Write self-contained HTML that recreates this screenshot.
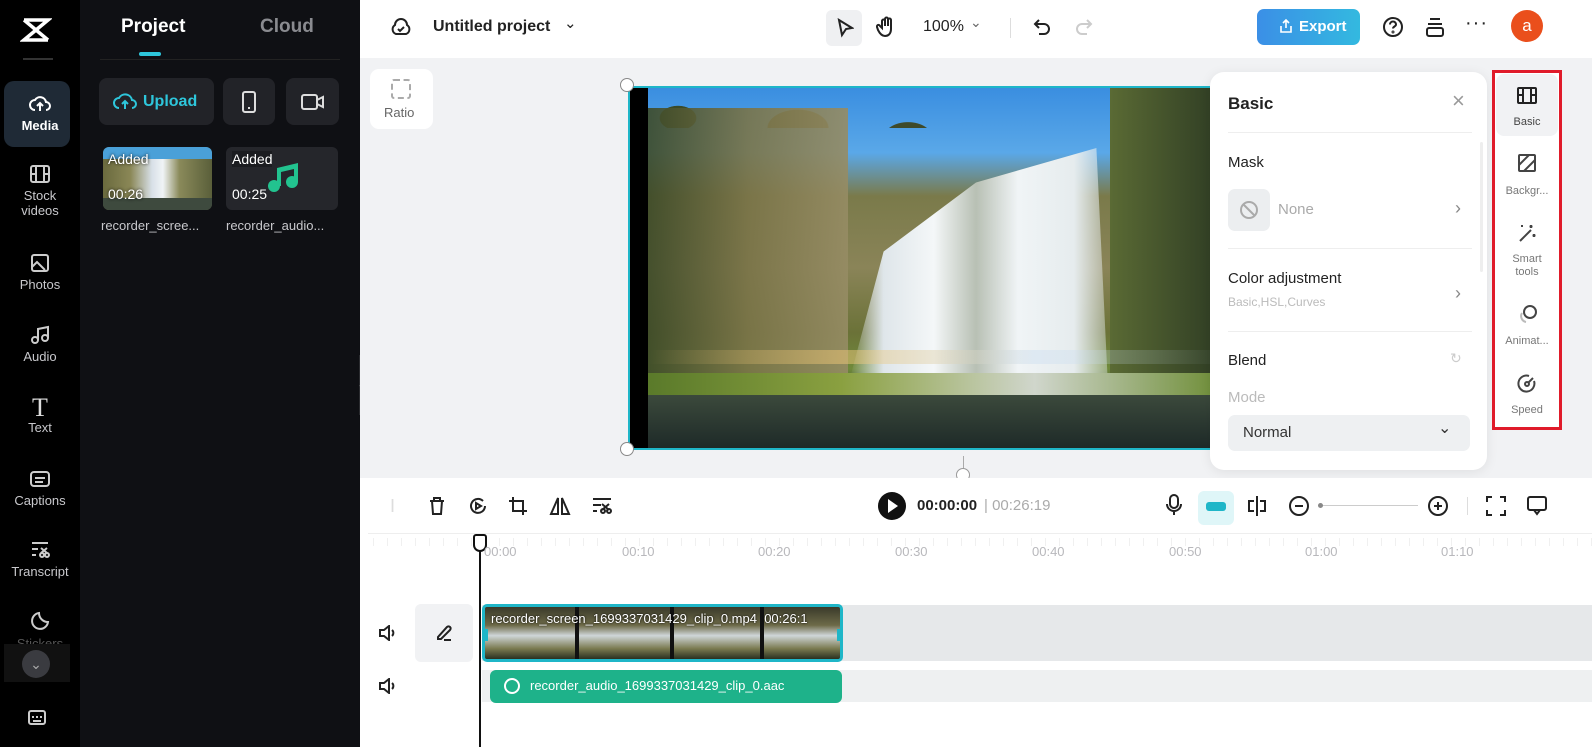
<!DOCTYPE html>
<html><head><meta charset="utf-8"><style>
*{box-sizing:border-box;margin:0;padding:0}
body{width:1592px;height:747px;overflow:hidden;font-family:"Liberation Sans",Arial,sans-serif;background:#fff;position:relative}
.a{position:absolute}
.rail{left:0;top:0;width:80px;height:747px;background:#000}
.ri{position:absolute;left:0;width:80px;text-align:center;color:#c8c8cc;font-size:13px}
.ri svg{display:block;margin:0 auto 4px}
.panel{left:80px;top:0;width:280px;height:747px;background:#0f1014}
.btn{position:absolute;background:#222328;border-radius:8px}
.top{left:360px;top:0;width:1232px;height:58px;background:#fff}
.canvas{left:360px;top:58px;width:1232px;height:420px;background:#f1f2f4}
.tl{left:360px;top:478px;width:1232px;height:269px;background:#fff}
.tick{position:absolute;top:544px;font-size:13px;color:#b8b8bc}
</style></head><body>
<div class="a rail">
 <svg class="a" style="left:20px;top:14px" width="32" height="32" viewBox="0 0 32 32" fill="none" stroke="#fff" stroke-width="3.5"><path d="M4 6h24L4 26h24"/><path d="M4 6l24 20"/></svg>
 <div class="a" style="left:23px;top:58px;width:30px;height:2px;background:#333"></div>
 <div class="a" style="left:4px;top:81px;width:66px;height:66px;background:#1f2a36;border-radius:10px"></div>
 <div class="ri" style="top:94px;color:#fff;font-weight:bold"><svg width="22" height="20" viewBox="0 0 22 20" fill="none" stroke="#fff" stroke-width="2"><path d="M6 16a5 5 0 010-10 6 6 0 0111 2 4 4 0 010 8"/><path d="M11 17V10M8 12l3-3 3 3"/></svg>Media</div>
 <div class="ri" style="top:164px"><svg width="22" height="20" viewBox="0 0 22 20" fill="none" stroke="#ccc" stroke-width="2"><rect x="2" y="2" width="18" height="16" rx="2"/><path d="M7 2v16M15 2v16M2 10h5M15 10h5"/></svg>Stock<br>videos</div>
 <div class="ri" style="top:253px"><svg width="22" height="20" viewBox="0 0 22 20" fill="none" stroke="#ccc" stroke-width="2"><rect x="3" y="2" width="16" height="16" rx="2"/><path d="M3 14l5-5 8 8"/></svg>Photos</div>
 <div class="ri" style="top:325px"><svg width="22" height="20" viewBox="0 0 22 20" fill="none" stroke="#ccc" stroke-width="2"><circle cx="6" cy="15" r="3"/><circle cx="16" cy="13" r="3"/><path d="M9 15V4l10-2v11"/></svg>Audio</div>
 <div class="ri" style="top:396px"><div style="font-family:'Liberation Serif';font-size:26px;line-height:24px;color:#ddd">T</div>Text</div>
 <div class="ri" style="top:469px"><svg width="22" height="20" viewBox="0 0 22 20" fill="none" stroke="#ccc" stroke-width="2"><rect x="2" y="3" width="18" height="14" rx="3"/><path d="M6 9h10M6 13h8"/></svg>Captions</div>
 <div class="ri" style="top:540px"><svg width="22" height="20" viewBox="0 0 22 20" fill="none" stroke="#ccc" stroke-width="2"><path d="M3 3h16M3 9h6M3 15h4"/><circle cx="13" cy="15" r="2"/><circle cx="18" cy="15" r="2"/><path d="M12 8l6 5M18 8l-6 5"/></svg>Transcript</div>
 <div class="ri" style="top:610px"><svg width="22" height="22" viewBox="0 0 22 22" fill="none" stroke="#ccc" stroke-width="2"><path d="M19 12A8 8 0 1110 3a9 9 0 009 9z"/></svg><span style="color:#555">Stickers</span></div>
 <div class="a" style="left:4px;top:644px;width:66px;height:38px;background:#111"></div>
 <div class="a" style="left:22px;top:650px;width:28px;height:28px;border-radius:50%;background:#3a3b40;color:#aaa;text-align:center;line-height:28px;font-size:14px">⌄</div>
 <svg class="a" style="left:27px;top:709px" width="20" height="18" viewBox="0 0 20 18" fill="none" stroke="#ccc" stroke-width="2"><rect x="2" y="2" width="16" height="13" rx="2"/><path d="M6 7v2M10 7v2M14 7v2M6 12h8"/></svg>
</div>
<div class="a panel">
 <div class="a" style="left:41px;top:16px;color:#fff;font-weight:bold;font-size:19px">Project</div>
 <div class="a" style="left:180px;top:16px;color:#8a8b90;font-weight:bold;font-size:19px">Cloud</div>
 <div class="a" style="left:59px;top:52px;width:22px;height:4px;background:#2ec6db;border-radius:2px"></div>
 <div class="a" style="left:20px;top:59px;width:240px;height:1px;background:#222"></div>
 <div class="btn" style="left:19px;top:78px;width:115px;height:47px;color:#2ec6db;font-weight:bold;font-size:16px;line-height:47px;padding-left:14px"><svg style="vertical-align:-5px;margin-right:6px" width="24" height="20" viewBox="0 0 24 20" fill="none" stroke="#2ec6db" stroke-width="2"><path d="M6 17a5 5 0 010-10 7 7 0 0113 2 4 4 0 010 8"/><path d="M12 18v-8M9 13l3-3 3 3"/></svg>Upload</div>
 <div class="btn" style="left:143px;top:78px;width:52px;height:47px"><svg class="a" style="left:18px;top:13px" width="16" height="22" viewBox="0 0 16 22" fill="none" stroke="#ddd" stroke-width="2"><rect x="2" y="1" width="12" height="20" rx="2"/><path d="M7 17h2"/></svg></div>
 <div class="btn" style="left:206px;top:78px;width:53px;height:47px"><svg class="a" style="left:15px;top:15px" width="24" height="18" viewBox="0 0 24 18" fill="none" stroke="#ddd" stroke-width="2"><rect x="1" y="2" width="15" height="14" rx="2"/><path d="M16 7l6-3v10l-6-3"/></svg></div>
 <div class="a" style="left:23px;top:147px;width:109px;height:63px;border-radius:6px;overflow:hidden;background:linear-gradient(90deg,#6a6a3e 0%,#8a8756 25%,#d8e0e8 45%,#f0f4f6 55%,#8a8a5a 70%,#5a5f3a 100%)"><div class="a" style="left:0;top:0;width:100%;height:12px;background:#4aa0d8"></div><div class="a" style="left:0;bottom:0;width:100%;height:12px;background:#3e4a3e"></div></div>
 <div class="a" style="left:28px;top:151px;color:#fff;font-size:14px;text-shadow:0 0 3px #000">Added</div>
 <div class="a" style="left:28px;top:186px;color:#fff;font-size:14px;text-shadow:0 0 3px #000">00:26</div>
 <div class="a" style="left:146px;top:147px;width:112px;height:63px;border-radius:6px;background:#25262b"></div>
 <div class="a" style="left:152px;top:151px;color:#fff;font-size:14px;background:#1b1c20">Added</div>
 <div class="a" style="left:152px;top:186px;color:#fff;font-size:14px">00:25</div>
 <svg class="a" style="left:186px;top:160px" width="34" height="34" viewBox="0 0 34 34" fill="#22c38f"><circle cx="8" cy="26" r="6"/><circle cx="26" cy="22" r="6"/><path d="M11 26V8l21-5v19h-4V9l-13 3v14z"/></svg>
 <div class="a" style="left:21px;top:218px;color:#c8c8cc;font-size:13px">recorder_scree...</div>
 <div class="a" style="left:146px;top:218px;color:#c8c8cc;font-size:13px">recorder_audio...</div>
</div>
<div class="a" style="left:359px;top:355px;width:11px;height:60px;background:#2a2b2f;border-radius:0 8px 8px 0;color:#777;font-size:12px;line-height:60px">‹</div>

<div class="a top">
 <svg class="a" style="left:30px;top:16px" width="22" height="22" viewBox="0 0 22 22" fill="none" stroke="#222" stroke-width="2"><path d="M6 18a5 5 0 01-1-9 6 6 0 0112 0 5 5 0 01-1 9z"/><path d="M8 13l2 2 4-4"/></svg>
 <div class="a" style="left:73px;top:18px;font-weight:bold;font-size:16px;color:#222">Untitled project</div>
 <div class="a" style="left:204px;top:14px;font-size:15px;color:#222">⌄</div>
 <div class="a" style="left:466px;top:10px;width:36px;height:36px;background:#eff0f2;border-radius:6px"></div>
 <svg class="a" style="left:476px;top:18px" width="18" height="20" viewBox="0 0 18 20" fill="none" stroke="#222" stroke-width="2"><path d="M3 2l13 8-6 1-4 6z"/></svg>
 <svg class="a" style="left:516px;top:16px" width="20" height="22" viewBox="0 0 20 22" fill="none" stroke="#222" stroke-width="2"><path d="M6 12V5a1.5 1.5 0 013 0v5V3a1.5 1.5 0 013 0v7V4a1.5 1.5 0 013 0v9c0 5-3 7-6 7s-5-2-7-6l-1-3a1.5 1.5 0 013-1z"/></svg>
 <div class="a" style="left:563px;top:18px;font-size:16px;color:#222">100%</div>
 <div class="a" style="left:610px;top:14px;font-size:14px;color:#666">⌄</div>
 <div class="a" style="left:650px;top:18px;width:1px;height:20px;background:#ddd"></div>
 <svg class="a" style="left:672px;top:17px" width="20" height="20" viewBox="0 0 20 20" fill="none" stroke="#222" stroke-width="2"><path d="M7 3L3 7l4 4"/><path d="M3 7h9a5 5 0 010 10H7"/></svg>
 <svg class="a" style="left:714px;top:17px" width="20" height="20" viewBox="0 0 20 20" fill="none" stroke="#ccc" stroke-width="2"><path d="M13 3l4 4-4 4"/><path d="M17 7H8a5 5 0 000 10h5"/></svg>
 <div class="a" style="left:897px;top:9px;width:103px;height:36px;border-radius:7px;background:linear-gradient(90deg,#3b8fe6,#33b9e0);color:#fff;font-weight:bold;font-size:15px;line-height:36px;padding-left:42px">Export</div>
 <svg class="a" style="left:918px;top:18px" width="16" height="16" viewBox="0 0 16 16" fill="none" stroke="#fff" stroke-width="1.6"><path d="M8 10V2M5 5l3-3 3 3M3 8v6h10V8"/></svg>
 <svg class="a" style="left:1022px;top:16px" width="22" height="22" viewBox="0 0 22 22" fill="none" stroke="#222" stroke-width="2"><circle cx="11" cy="11" r="9"/><path d="M8 8.5a3 3 0 116 0c0 2-3 2-3 4"/><circle cx="11" cy="16" r=".5"/></svg>
 <svg class="a" style="left:1065px;top:16px" width="20" height="22" viewBox="0 0 20 22" fill="none" stroke="#222" stroke-width="2"><path d="M5 3h10M3 8h14"/><rect x="2" y="12" width="16" height="8" rx="2"/></svg>
 <div class="a" style="left:1105px;top:12px;font-size:20px;color:#222;letter-spacing:1px">···</div>
 <div class="a" style="left:1151px;top:10px;width:32px;height:32px;border-radius:50%;background:#ea4f1c;color:#fff;text-align:center;line-height:31px;font-size:17px">a</div>
</div>

<div class="a canvas">
 <div class="a" style="left:10px;top:11px;width:63px;height:60px;background:#fff;border-radius:9px"></div>
 <div class="a" style="left:31px;top:21px;width:20px;height:20px;border:2px dashed #aaa;border-radius:3px"></div>
 <div class="a" style="left:24px;top:47px;font-size:13px;color:#666">Ratio</div>
 <div class="a" style="left:268px;top:28px;width:584px;height:364px;border:2px solid #1fb6c8;background:#000;overflow:hidden">
  <div class="a" style="left:18px;top:0;width:600px;height:360px;background:linear-gradient(180deg,#3a8ee0 0%,#5aa8e8 18%,#7a7a4a 30%,#8a8458 50%,#6b7238 68%,#6f8a3a 78%,#3c4a3c 85%,#1e2a28 100%)"></div>
  <div class="a" style="left:18px;top:0;width:600px;height:40px;background:radial-gradient(ellipse 30px 20px at 30px 30px,#3a4a28 60%,transparent 62%),radial-gradient(ellipse 50px 30px at 150px 40px,#445030 60%,transparent 62%),radial-gradient(ellipse 40px 26px at 260px 50px,#3e4a2a 60%,transparent 62%)"></div>
  <div class="a" style="left:18px;top:20px;width:200px;height:270px;background:linear-gradient(90deg,#3d4a28,#7a7448 50%,#968c64);opacity:.9"></div>
  <div class="a" style="left:220px;top:60px;width:280px;height:230px;background:linear-gradient(90deg,rgba(255,255,255,0) 0%,#dfe6ea 12%,#f4f7f8 30%,#b8c0b4 45%,#f0f4f6 60%,#e6ecee 80%,rgba(255,255,255,0) 100%);clip-path:polygon(12% 45%,45% 15%,88% 0,92% 100%,0 100%)"></div>
  <div class="a" style="left:480px;top:0;width:110px;height:300px;background:linear-gradient(90deg,#5a6a34,#2f3d24)"></div>
  <div class="a" style="left:18px;top:262px;width:580px;height:14px;background:linear-gradient(90deg,transparent,rgba(240,200,120,.5),rgba(200,220,240,.4),transparent)"></div>
  <div class="a" style="left:18px;top:285px;width:580px;height:22px;background:linear-gradient(90deg,#5a7a2a,#8aa040,#d0d6cc,#6a8a30)"></div>
 </div>
 <div class="a" style="left:260px;top:20px;width:14px;height:14px;border-radius:50%;background:#fff;border:1.5px solid #888"></div>
 <div class="a" style="left:260px;top:384px;width:14px;height:14px;border-radius:50%;background:#fff;border:1.5px solid #888"></div>
 <div class="a" style="left:850px;top:14px;width:277px;height:398px;background:#fff;border-radius:14px;box-shadow:0 2px 12px rgba(0,0,0,.08)">
  <div class="a" style="left:18px;top:22px;font-weight:bold;font-size:17px;color:#222">Basic</div>
  <div class="a" style="left:242px;top:16px;font-size:22px;color:#999">×</div>
  <div class="a" style="left:18px;top:60px;width:244px;height:1px;background:#eee"></div>
  <div class="a" style="left:18px;top:82px;font-size:15px;color:#222">Mask</div>
  <div class="a" style="left:18px;top:117px;width:42px;height:42px;border-radius:7px;background:#eceef0"></div>
  <svg class="a" style="left:28px;top:127px" width="22" height="22" viewBox="0 0 22 22" fill="none" stroke="#aaa" stroke-width="2"><circle cx="11" cy="11" r="8"/><path d="M5 5l12 12"/></svg>
  <div class="a" style="left:68px;top:129px;font-size:15px;color:#aaa">None</div>
  <div class="a" style="left:245px;top:126px;font-size:18px;color:#888">›</div>
  <div class="a" style="left:18px;top:176px;width:244px;height:1px;background:#eee"></div>
  <div class="a" style="left:18px;top:198px;font-size:15px;color:#222">Color adjustment</div>
  <div class="a" style="left:18px;top:223px;font-size:12px;color:#bbb">Basic,HSL,Curves</div>
  <div class="a" style="left:245px;top:211px;font-size:18px;color:#888">›</div>
  <div class="a" style="left:18px;top:259px;width:244px;height:1px;background:#eee"></div>
  <div class="a" style="left:18px;top:280px;font-size:15px;color:#222">Blend</div>
  <div class="a" style="left:240px;top:278px;font-size:14px;color:#ccc">↻</div>
  <div class="a" style="left:18px;top:317px;font-size:15px;color:#bbb">Mode</div>
  <div class="a" style="left:18px;top:343px;width:242px;height:36px;border-radius:7px;background:#eef0f2"></div>
  <div class="a" style="left:33px;top:352px;font-size:15px;color:#333">Normal</div>
  <div class="a" style="left:228px;top:346px;font-size:16px;color:#333">⌄</div>
  <div class="a" style="left:270px;top:70px;width:3px;height:130px;background:#eee;border-radius:2px"></div>
 </div>
 <div class="a" style="left:1132px;top:12px;width:70px;height:360px;border:3px solid #e01b2a;background:#fff"></div>
 <div class="a" style="left:1136px;top:16px;width:62px;height:62px;background:#f1f2f4;border-radius:8px"></div>
 <svg class="a" style="left:1157px;top:29px" width="20" height="17" viewBox="0 0 20 17" fill="none" stroke="#222" stroke-width="2"><rect x="1" y="1" width="18" height="15" rx="1"/><path d="M6 1v15M14 1v15M1 8h5M14 8h5"/></svg>
 <div class="a" style="left:1136px;top:58px;width:62px;text-align:center;font-size:11px;color:#444">Basic</div>
 <svg class="a" style="left:1158px;top:96px" width="18" height="18" viewBox="0 0 18 18" fill="none" stroke="#444" stroke-width="2"><rect x="1" y="1" width="16" height="16" rx="1"/><path d="M1 11L11 1M6 17L17 6"/></svg>
 <div class="a" style="left:1136px;top:127px;width:62px;text-align:center;font-size:11px;color:#777">Backgr...</div>
 <svg class="a" style="left:1157px;top:165px" width="20" height="20" viewBox="0 0 20 20" fill="none" stroke="#444" stroke-width="2"><path d="M3 18L14 7"/><path d="M14 2v3M12.5 3.5h3M5 2v2M4 3h2M17 11v3M15.5 12.5h3"/></svg>
 <div class="a" style="left:1136px;top:195px;width:62px;text-align:center;font-size:11px;color:#777;line-height:13px">Smart<br>tools</div>
 <svg class="a" style="left:1158px;top:246px" width="20" height="20" viewBox="0 0 20 20" fill="none" stroke="#444" stroke-width="2"><circle cx="12" cy="8" r="6"/><path d="M4 9a6 6 0 004 9" stroke="#bbb"/></svg>
 <div class="a" style="left:1136px;top:277px;width:62px;text-align:center;font-size:11px;color:#777">Animat...</div>
 <svg class="a" style="left:1157px;top:315px" width="20" height="20" viewBox="0 0 20 20" fill="none" stroke="#444" stroke-width="2"><path d="M17 8a8 8 0 11-5-5"/><circle cx="10" cy="11" r="2"/><path d="M11 10l5-5"/></svg>
 <div class="a" style="left:1136px;top:346px;width:62px;text-align:center;font-size:11px;color:#777">Speed</div>
 <div class="a" style="left:603px;top:398px;width:1px;height:14px;background:#aaa"></div>
 <div class="a" style="left:596px;top:410px;width:14px;height:14px;border-radius:50%;background:#fff;border:1px solid #999"></div>
</div>

<div class="a tl">
 <div class="a" style="left:30px;top:18px;font-size:18px;color:#ddd">I</div>
 <svg class="a" style="left:68px;top:18px" width="18" height="20" viewBox="0 0 18 20" fill="none" stroke="#222" stroke-width="2"><path d="M2 5h14M6 5V2h6v3M4 5l1 13h8l1-13"/></svg>
 <svg class="a" style="left:108px;top:18px" width="20" height="20" viewBox="0 0 20 20" fill="none" stroke="#222" stroke-width="2"><path d="M17 10a7 7 0 11-2-5"/><path d="M8 7l5 3-5 3z"/></svg>
 <svg class="a" style="left:148px;top:18px" width="20" height="20" viewBox="0 0 20 20" fill="none" stroke="#222" stroke-width="2"><path d="M5 1v14h14M1 5h14v14"/></svg>
 <svg class="a" style="left:189px;top:18px" width="22" height="20" viewBox="0 0 22 20" fill="none" stroke="#222" stroke-width="2"><path d="M9 2L2 18h7zM13 2l7 16h-7z"/></svg>
 <svg class="a" style="left:231px;top:18px" width="22" height="20" viewBox="0 0 22 20" fill="none" stroke="#222" stroke-width="2"><path d="M2 3h18M2 9h8M2 15h4"/><circle cx="12" cy="15" r="2"/><circle cx="18" cy="15" r="2"/><path d="M11 8l7 6M18 8l-7 6"/></svg>
 <div class="a" style="left:518px;top:14px;width:28px;height:28px;border-radius:50%;background:#111"></div>
 <div class="a" style="left:528px;top:21px;width:0;height:0;border-left:10px solid #fff;border-top:7px solid transparent;border-bottom:7px solid transparent"></div>
 <div class="a" style="left:557px;top:19px;font-size:15px;font-weight:bold;color:#222">00:00:00</div>
 <div class="a" style="left:624px;top:19px;font-size:15px;color:#aaa">| 00:26:19</div>
 <svg class="a" style="left:806px;top:16px" width="16" height="22" viewBox="0 0 16 22" fill="none" stroke="#222" stroke-width="2"><rect x="4" y="1" width="8" height="13" rx="4"/><path d="M1 10a7 7 0 0014 0M8 17v4"/></svg>
 <div class="a" style="left:838px;top:13px;width:36px;height:34px;border-radius:6px;background:#dff6f8"></div>
 <div class="a" style="left:846px;top:24px;width:20px;height:9px;border-radius:3px;background:#1fb6c8"></div>
 <svg class="a" style="left:886px;top:17px" width="22" height="22" viewBox="0 0 22 22" fill="none" stroke="#222" stroke-width="2"><path d="M11 1v20M8 6H3v10h5M14 6h5v10h-5"/></svg>
 <svg class="a" style="left:928px;top:17px" width="22" height="22" viewBox="0 0 22 22" fill="none" stroke="#222" stroke-width="2"><circle cx="11" cy="11" r="9"/><path d="M7 11h8"/></svg>
 <div class="a" style="left:958px;top:27px;width:100px;height:1px;background:#ccc"></div>
 <div class="a" style="left:958px;top:25px;width:5px;height:5px;border-radius:50%;background:#888"></div>
 <svg class="a" style="left:1067px;top:17px" width="22" height="22" viewBox="0 0 22 22" fill="none" stroke="#222" stroke-width="2"><circle cx="11" cy="11" r="9"/><path d="M7 11h8M11 7v8"/></svg>
 <div class="a" style="left:1107px;top:19px;width:1px;height:18px;background:#ddd"></div>
 <svg class="a" style="left:1126px;top:18px" width="20" height="20" viewBox="0 0 20 20" fill="none" stroke="#222" stroke-width="2"><path d="M1 6V1h5M14 1h5v5M19 14v5h-5M6 19H1v-5"/></svg>
 <svg class="a" style="left:1166px;top:17px" width="22" height="22" viewBox="0 0 22 22" fill="none" stroke="#222" stroke-width="2"><rect x="2" y="2" width="18" height="13" rx="2"/><path d="M8 15l3 4 3-4"/></svg>
 <div class="a" style="left:8px;top:55px;width:1224px;height:1px;background:#eee"></div>
 <div class="a" style="left:0;width:1232px;background:repeating-linear-gradient(90deg,transparent 0,transparent 13px,#e6e6e6 13px,#e6e6e6 14px);opacity:.6;height:8px;top:60px"></div>
 <div class="a" style="left:55px;top:126px;width:58px;height:58px;border-radius:6px;background:#f1f2f4"></div>
 <svg class="a" style="left:75px;top:146px" width="18" height="18" viewBox="0 0 18 18" fill="none" stroke="#222" stroke-width="2"><path d="M3 13L12 3a2 2 0 013 3L6 15H3zM9 16h7"/></svg>
 <svg class="a" style="left:18px;top:147px" width="20" height="16" viewBox="0 0 20 16" fill="none" stroke="#222" stroke-width="2"><path d="M2 5h4l5-4v14l-5-4H2zM14 5a4 4 0 010 6"/></svg>
 <svg class="a" style="left:18px;top:200px" width="20" height="16" viewBox="0 0 20 16" fill="none" stroke="#222" stroke-width="2"><path d="M2 5h4l5-4v14l-5-4H2zM14 5a4 4 0 010 6"/></svg>
 <div class="a" style="left:122px;top:127px;width:1110px;height:56px;background:#e6e8ea"></div>
 <div class="a" style="left:122px;top:192px;width:1110px;height:32px;background:#eef0f1"></div>
 <div class="a" style="left:122px;top:126px;width:361px;height:58px;border:3px solid #1fb6c8;border-radius:5px;background:linear-gradient(180deg,#3a3a2a 0%,#6d6a48 35%,#cfd6d8 55%,#7a7a50 80%,#2a3020 100%);overflow:hidden">
  <div class="a" style="left:90px;top:0;width:4px;height:60px;background:#111"></div><div class="a" style="left:185px;top:0;width:4px;height:60px;background:#111"></div><div class="a" style="left:275px;top:0;width:4px;height:60px;background:#111"></div>
  <div class="a" style="left:0;top:22px;width:3px;height:12px;background:#1fb6c8"></div><div class="a" style="right:0;top:22px;width:3px;height:12px;background:#1fb6c8"></div>
  <div class="a" style="left:6px;top:4px;color:#fff;font-size:13px;white-space:nowrap;text-shadow:0 0 2px #000">recorder_screen_1699337031429_clip_0.mp4 &nbsp;00:26:1</div>
 </div>
 <div class="a" style="left:130px;top:192px;width:352px;height:33px;border-radius:6px;background:#1eb28a"></div>
 <div class="a" style="left:144px;top:200px;width:16px;height:16px;border-radius:50%;border:2px solid #fff"></div>
 <div class="a" style="left:170px;top:200px;color:#fff;font-size:13px">recorder_audio_1699337031429_clip_0.aac</div>
 <div class="a" style="left:119px;top:60px;width:2px;height:209px;background:#111"></div>
 <div class="a" style="left:113px;top:56px;width:14px;height:18px;border:2px solid #111;border-radius:3px 3px 7px 7px;background:#fff"></div>
</div>
<div class="tick" style="left:484px">00:00</div>
<div class="tick" style="left:622px">00:10</div>
<div class="tick" style="left:758px">00:20</div>
<div class="tick" style="left:895px">00:30</div>
<div class="tick" style="left:1032px">00:40</div>
<div class="tick" style="left:1169px">00:50</div>
<div class="tick" style="left:1305px">01:00</div>
<div class="tick" style="left:1441px">01:10</div>
</body></html>
